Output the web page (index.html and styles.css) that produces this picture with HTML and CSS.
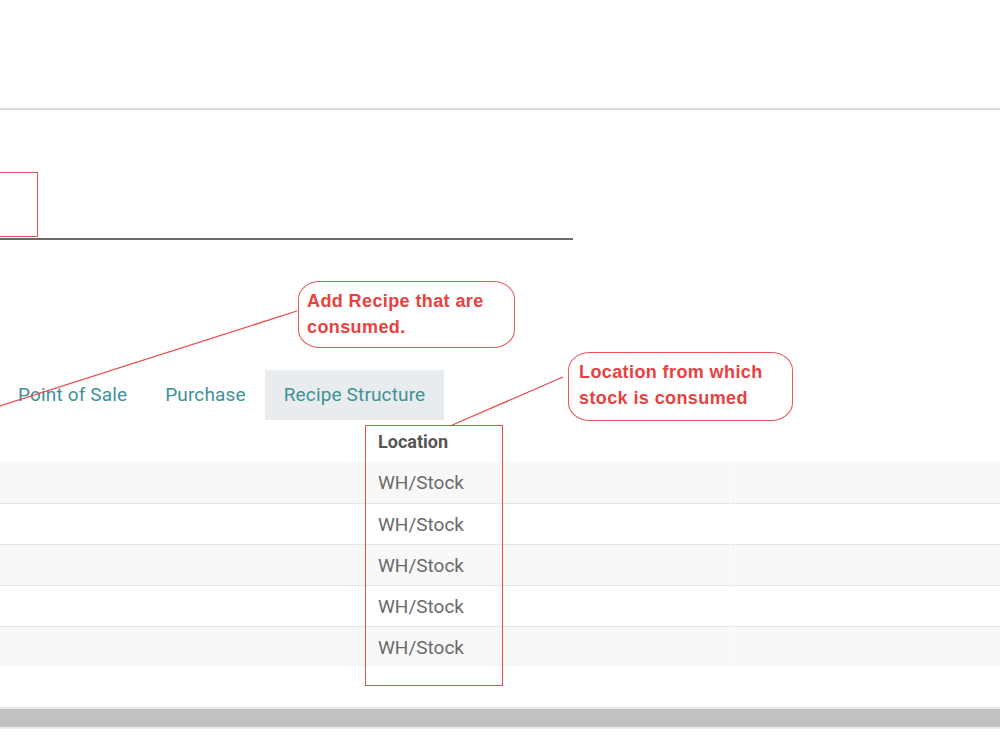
FILE: index.html
```html
<!DOCTYPE html>
<html lang="en">
<head>
  <meta charset="UTF-8">
  <title>Recipe Structure</title>
  <link rel="stylesheet" href="styles.css">
</head>
<body>
  <div class="page">
    <div class="topbar"></div>

    <div class="title-row">
      <div class="title-field">
        <div class="mark-name"></div>
      </div>
    </div>

    <div class="tabs">
      <div class="tab">Point of Sale</div>
      <div class="tab">Purchase</div>
      <div class="tab active">Recipe Structure</div>
    </div>

    <table class="lines">
      <thead>
        <tr>
          <th class="col-product"></th>
          <th class="col-location">Location</th>
          <th></th>
        </tr>
      </thead>
      <tbody>
        <tr><td></td><td>WH/Stock</td><td></td></tr>
        <tr><td></td><td>WH/Stock</td><td></td></tr>
        <tr><td></td><td>WH/Stock</td><td></td></tr>
        <tr><td></td><td>WH/Stock</td><td></td></tr>
        <tr><td></td><td>WH/Stock</td><td></td></tr>
      </tbody>
    </table>

    <div class="scrollbar"></div>

    <!-- annotations -->
    <svg class="arrows" width="1000" height="750" viewBox="0 0 1000 750">
      <line x1="297" y1="311" x2="0" y2="406" />
      <line x1="563" y1="377" x2="450" y2="426" />
    </svg>
    <div class="callout callout-recipe">Add Recipe that are<br>consumed.</div>
    <div class="callout callout-location">Location from which<br>stock is consumed</div>
    <div class="mark-location"></div>
  </div>
</body>
</html>
```

FILE: styles.css
```css
body {
  margin: 0;
  background: #fff;
  font-family: Roboto, "Liberation Sans", sans-serif;
}
.page {
  position: relative;
  width: 1000px;
  height: 750px;
  overflow: hidden;
}
.topbar {
  height: 108px;
  border-bottom: 2px solid #dadada;
}
.title-row {
  padding-top: 62px;
}
.title-field {
  width: 573px;
  height: 66px;
  border-bottom: 2px solid #6a6a6a;
}
.mark-name {
  width: 38px;
  height: 65px;
  border: 1.5px solid #e8504f;
  border-left: none;
  box-sizing: border-box;
}
.tabs {
  display: flex;
  margin-top: 130px;
  margin-left: -1px;
}
.tab {
  height: 50px;
  line-height: 50px;
  padding: 0 19px;
  font-size: 19px;
  letter-spacing: 0.15px;
  color: #3e9196;
}
.tab.active {
  background: #e9ecef;
}
.lines {
  width: 100%;
  border-collapse: collapse;
  font-size: 19px;
}
.lines thead tr {
  height: 42px;
  box-shadow: 0 3px 5px rgba(0, 0, 0, 0.05);
}
.lines th {
  text-align: left;
  font-weight: bold;
  font-size: 18px;
  color: #555;
  padding: 0 12px;
}
.col-product {
  width: 342px;
}
.col-location {
  width: 340px;
}
.lines td {
  height: 40px;
  padding: 0 12px;
  color: #6a6a6a;
  border-top: 1px solid #e6e6ea;
}
.lines tbody tr:nth-child(odd) {
  background: #f8f8f8;
}
.lines tbody tr:first-child td {
  border-top: none;
  height: 41px;
}
.lines td:nth-child(2) {
  border-right: 1px solid #fdfdfd;
}
.scrollbar {
  margin-top: 40px;
  height: 18px;
  background: #c1c1c1;
  border-top: 2px solid #e6e6e6;
  border-bottom: 2px solid #ececec;
}

/* annotations */
.arrows {
  position: absolute;
  top: 0;
  left: 0;
}
.arrows line {
  stroke: #e84a4a;
  stroke-width: 1.2;
}
.callout {
  position: absolute;
  box-sizing: border-box;
  border: 1.5px solid #e2595a;
  border-radius: 22px / 18px;
  background: #fff;
  padding: 6px 0 0 8px;
  font-family: "Liberation Sans", Arial, sans-serif;
  font-weight: bold;
  font-size: 18px;
  letter-spacing: 0.4px;
  line-height: 26px;
  color: #e8413f;
}
.callout-recipe {
  left: 298px;
  top: 281px;
  width: 217px;
  height: 67px;
}
.callout-location {
  left: 568px;
  top: 352px;
  width: 225px;
  height: 69px;
  padding-left: 10px;
}
.mark-location {
  position: absolute;
  left: 365px;
  top: 425px;
  width: 138px;
  height: 261px;
  box-sizing: border-box;
  border: 1.5px solid #e8504f;
}
```
